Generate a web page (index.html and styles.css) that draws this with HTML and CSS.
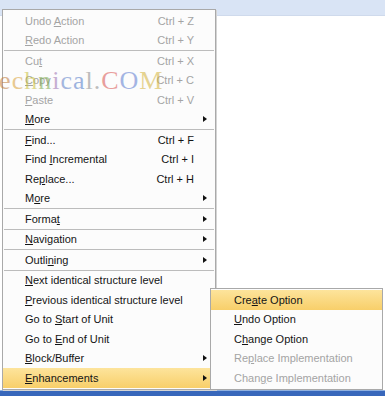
FILE: index.html
```html
<!DOCTYPE html>
<html lang="en">
<head>
    <meta charset="UTF-8">
    <title>Edit Menu</title>
    <link rel="stylesheet" href="styles.css">
</head>
<body>
    <div class="app">
        <div class="strip"></div>
        <div class="canvas"></div>
        <div class="taskbar"></div>

        <div class="menu">
            <div class="item off"><span class="label">Undo <u>A</u>ction</span><span class="key">Ctrl + Z</span><span class="sub"></span></div>
            <div class="item off"><span class="label"><u>R</u>edo Action</span><span class="key">Ctrl + Y</span><span class="sub"></span></div>
            <div class="sep"></div>
            <div class="item off"><span class="label">Cu<u>t</u></span><span class="key">Ctrl + X</span><span class="sub"></span></div>
            <div class="item off"><span class="label"><u>C</u>opy</span><span class="key">Ctrl + C</span><span class="sub"></span></div>
            <div class="item off"><span class="label"><u>P</u>aste</span><span class="key">Ctrl + V</span><span class="sub"></span></div>
            <div class="item"><span class="label"><u>M</u>ore</span><span class="key"></span><span class="sub"><i class="arrow"></i></span></div>
            <div class="sep"></div>
            <div class="item"><span class="label"><u>F</u>ind...</span><span class="key">Ctrl + F</span><span class="sub"></span></div>
            <div class="item"><span class="label">Find <u>I</u>ncremental</span><span class="key">Ctrl + I</span><span class="sub"></span></div>
            <div class="item"><span class="label">Re<u>p</u>lace...</span><span class="key">Ctrl + H</span><span class="sub"></span></div>
            <div class="item"><span class="label">M<u>o</u>re</span><span class="key"></span><span class="sub"><i class="arrow"></i></span></div>
            <div class="sep"></div>
            <div class="item"><span class="label">Forma<u>t</u></span><span class="key"></span><span class="sub"><i class="arrow"></i></span></div>
            <div class="sep"></div>
            <div class="item"><span class="label"><u>N</u>avigation</span><span class="key"></span><span class="sub"><i class="arrow"></i></span></div>
            <div class="sep"></div>
            <div class="item"><span class="label">Outli<u>n</u>ing</span><span class="key"></span><span class="sub"><i class="arrow"></i></span></div>
            <div class="sep"></div>
            <div class="item"><span class="label"><u>N</u>ext identical structure level</span><span class="key"></span><span class="sub"></span></div>
            <div class="item"><span class="label"><u>P</u>revious identical structure level</span><span class="key"></span><span class="sub"></span></div>
            <div class="item"><span class="label">Go to <u>S</u>tart of Unit</span><span class="key"></span><span class="sub"></span></div>
            <div class="item"><span class="label">Go to <u>E</u>nd of Unit</span><span class="key"></span><span class="sub"></span></div>
            <div class="item"><span class="label"><u>B</u>lock/Buffer</span><span class="key"></span><span class="sub"><i class="arrow"></i></span></div>
            <div class="item hot"><span class="label"><u>E</u>nhancements</span><span class="key"></span><span class="sub"><i class="arrow"></i></span></div>
        </div>

        <div class="menu submenu">
            <div class="item hot"><span class="label">Cre<u>a</u>te Option</span></div>
            <div class="item"><span class="label"><u>U</u>ndo Option</span></div>
            <div class="item"><span class="label">C<u>h</u>ange Option</span></div>
            <div class="item off"><span class="label">Re<u>p</u>lace Implementation</span></div>
            <div class="item off"><span class="label">Chan<u>g</u>e Implementation</span></div>
        </div>

        <div class="watermark"><span class="c1">T</span><span class="c2">e</span><span class="c3">c</span><span class="c4">h</span><span class="c5">n</span><span class="c6">i</span><span class="c7">c</span><span class="c8">a</span><span class="c9">l</span><span class="c9">.</span><span class="c10">C</span><span class="c11">O</span><span class="c12">M</span></div>
    </div>
</body>
</html>
```

FILE: styles.css
```css
body {
    margin: 0;
    background: #fff;
    font-family: 'Liberation Sans', Arial, sans-serif;
}
.app {
    position: relative;
    width: 385px;
    height: 396px;
    display: flex;
    flex-direction: column;
    overflow: hidden;
}
.strip {
    height: 15px;
    background: #d9e4f5;
    border-bottom: 1px solid #cfdaec;
}
.canvas {
    flex: 1;
    background: #fff;
}
.taskbar {
    height: 5px;
    background: #3867bb;
    border-top: 1px solid #8fb0e0;
}
.menu {
    position: absolute;
    left: 2px;
    top: 9px;
    width: 212px;
    padding: 1px 0;
    background: #fcfcfc;
    border: 1px solid #a9a9a9;
    box-shadow: 1px 1px 0 #d4d4d4;
    font-size: 11px;
    color: #141414;
}
.item {
    display: flex;
    align-items: center;
    height: 19.5px;
    padding: 0 8px 0 22px;
    white-space: nowrap;
}
.item .label {
    flex: 1;
}
.item .key {
    text-align: right;
}
.item .sub {
    width: 13px;
    display: flex;
    justify-content: flex-end;
}
.arrow {
    width: 0;
    height: 0;
    border-left: 4px solid #111;
    border-top: 3.5px solid transparent;
    border-bottom: 3.5px solid transparent;
}
.item.off {
    color: #a4a4a4;
}
.item.hot {
    background: linear-gradient(#fde49c, #f8cf6a);
}
.sep {
    height: 1px;
    margin: 0 1px;
    background: #bcbcbc;
}
.submenu {
    left: 210px;
    top: 288px;
    width: 171px;
    box-shadow: none;
}
.submenu .item {
    padding: 0 8px 0 23px;
}
.watermark {
    position: absolute;
    left: -16px;
    top: 68px;
    font-family: 'Liberation Serif', 'Times New Roman', serif;
    font-size: 26px;
    line-height: 26px;
    letter-spacing: 1px;
    opacity: 0.55;
    pointer-events: none;
}
.c1 { color: #b46a3a; }
.c2 { color: #c07a3a; }
.c3 { color: #d9a23a; }
.c4 { color: #c8c03a; }
.c5 { color: #7aa84a; }
.c6 { color: #9a6fb0; }
.c7 { color: #5d7fc9; }
.c8 { color: #4f78c8; }
.c9 { color: #8a8a8a; }
.c10 { color: #d9534f; }
.c11 { color: #5b7bd0; }
.c12 { color: #d4b23a; }
```
